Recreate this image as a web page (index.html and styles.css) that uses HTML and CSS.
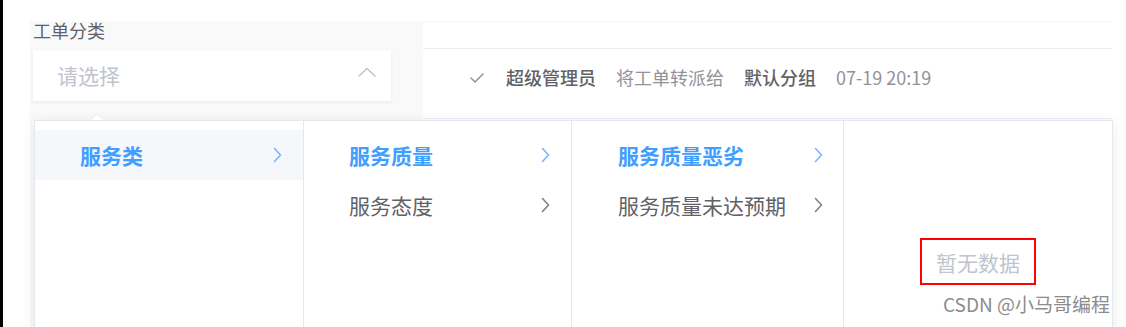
FILE: index.html
```html
<!DOCTYPE html>
<html lang="zh-CN">
<head>
<meta charset="utf-8">
<title>工单分类</title>
<link rel="stylesheet" href="styles.css">
</head>
<body>
<div class="shot">
  <div class="edge"></div>
  <div class="page">
    <div class="form-panel">
      <div class="label">工单分类</div>
      <div class="select">
        <span class="placeholder">请选择</span>
        <svg class="caret" width="18" height="10" viewBox="0 0 18 10"><polyline points="1,9 9,1.5 17,9" fill="none" stroke="#c0c4cc" stroke-width="1.6" stroke-linecap="round" stroke-linejoin="round"/></svg>
      </div>
    </div>
    <div class="log-panel">
      <div class="log-row">
        <svg class="check" width="14" height="10" viewBox="0 0 14 10"><polyline points="1,5 5,9 13,1" fill="none" stroke="#909399" stroke-width="1.5" stroke-linecap="round" stroke-linejoin="round"/></svg>
        <span class="strong">超级管理员</span>
        <span class="muted">将工单转派给</span>
        <span class="strong">默认分组</span>
        <span class="muted">07-19 20:19</span>
      </div>
    </div>
  </div>

  <div class="popper">
    <div class="menu menu-1">
      <div class="item active hover"><span>服务类</span><svg class="chev" width="9" height="16" viewBox="0 0 9 16"><polyline points="1.5,1.5 7.5,8 1.5,14.5" fill="none" stroke-width="1.6" stroke-linecap="round" stroke-linejoin="round"/></svg></div>
    </div>
    <div class="menu menu-2">
      <div class="item active"><span>服务质量</span><svg class="chev" width="9" height="16" viewBox="0 0 9 16"><polyline points="1.5,1.5 7.5,8 1.5,14.5" fill="none" stroke-width="1.6" stroke-linecap="round" stroke-linejoin="round"/></svg></div>
      <div class="item"><span>服务态度</span><svg class="chev" width="9" height="16" viewBox="0 0 9 16"><polyline points="1.5,1.5 7.5,8 1.5,14.5" fill="none" stroke-width="1.6" stroke-linecap="round" stroke-linejoin="round"/></svg></div>
    </div>
    <div class="menu menu-3">
      <div class="item active"><span>服务质量恶劣</span><svg class="chev" width="9" height="16" viewBox="0 0 9 16"><polyline points="1.5,1.5 7.5,8 1.5,14.5" fill="none" stroke-width="1.6" stroke-linecap="round" stroke-linejoin="round"/></svg></div>
      <div class="item"><span>服务质量未达预期</span><svg class="chev" width="9" height="16" viewBox="0 0 9 16"><polyline points="1.5,1.5 7.5,8 1.5,14.5" fill="none" stroke-width="1.6" stroke-linecap="round" stroke-linejoin="round"/></svg></div>
    </div>
    <div class="menu menu-4">
      <div class="empty">暂无数据</div>
    </div>
  </div>
  <div class="popper-arrow"></div>

  <div class="watermark">CSDN @小马哥编程</div>
</div>
</body>
</html>
```

FILE: styles.css
```css
* { box-sizing: border-box; }

html, body {
  margin: 0;
  padding: 0;
  background: #ffffff;
}

body {
  font-family: "Noto Sans CJK SC", "Noto Sans", "Liberation Sans", sans-serif;
}

.shot {
  position: relative;
  width: 1126px;
  height: 327px;
  overflow: hidden;
  display: flex;
  background: #ffffff;
}

.edge {
  width: 3px;
  flex: none;
  background: #000000;
}

.page {
  flex: 1;
  display: flex;
  padding-top: 21px;
}

.form-panel {
  margin-left: 27px;
  width: 393px;
  flex: none;
  background: #f9f9fa;
  padding-left: 3px;
}

.label {
  font-size: 18px;
  line-height: 18px;
  color: #606266;
}

.select {
  margin-top: 11px;
  width: 358px;
  height: 51px;
  background: #ffffff;
  box-shadow: 0 1px 3px rgba(0, 0, 0, 0.07);
  display: flex;
  align-items: center;
  justify-content: space-between;
  padding: 0 15px 0 24px;
}

.placeholder {
  font-size: 21px;
  color: #c0c4cc;
  line-height: 24px;
  margin-top: -1px;
}

.caret {
  display: block;
  margin-top: -8px;
}

.log-panel {
  width: 689px;
  flex: none;
  border-top: 1px solid #f6f6f7;
  padding-top: 26px;
}

.log-row {
  border-top: 1px solid #ebeef5;
  border-bottom: 1px solid #ebeef5;
  height: 71px;
  padding: 19px 0 0 47px;
  display: flex;
  align-items: flex-start;
  font-size: 18px;
  line-height: 18px;
}

.check {
  display: block;
  margin-top: 5px;
  margin-right: 22px;
}

.strong {
  color: #606266;
  font-weight: 500;
  margin-right: 20px;
}

.muted {
  color: #909399;
  margin-right: 20px;
}

.popper {
  position: absolute;
  left: 34px;
  top: 120px;
  width: 1079px;
  height: 240px;
  background: #ffffff;
  border: 1px solid #e4e7ed;
  box-shadow: 0 2px 12px rgba(0, 0, 0, 0.08);
  display: flex;
}

.popper-arrow {
  position: absolute;
  left: 91px;
  top: 114px;
  width: 0;
  height: 0;
  border-left: 6px solid transparent;
  border-right: 6px solid transparent;
  border-bottom: 6px solid #ffffff;
  filter: drop-shadow(0 -1px 0 #e4e7ed);
}

.menu {
  height: 100%;
  padding-top: 9px;
  border-right: 1px solid #e4e7ed;
  flex: none;
}

.menu-1 { width: 269px; }
.menu-2 { width: 268px; }
.menu-3 { width: 272px; }
.menu-4 {
  flex: 1;
  border-right: none;
  display: flex;
  justify-content: center;
  align-items: flex-start;
  padding-top: 117px;
}

.item {
  height: 50px;
  display: flex;
  align-items: center;
  justify-content: space-between;
  padding: 0 21px 0 45px;
  font-size: 21px;
  color: #606266;
}

.item .chev {
  display: block;
  stroke: #7d8087;
}

.item.active {
  color: #409eff;
  font-weight: 700;
}

.item.active .chev {
  stroke: #79b6ff;
}

.item.hover {
  background: #f5f7fa;
}

.menu-3 .item { padding-left: 46px; padding-right: 20px; }

.empty {
  width: 116px;
  height: 47px;
  border: 2px solid #ff0000;
  display: flex;
  align-items: center;
  justify-content: center;
  font-size: 21px;
  color: #c0c4cc;
}

.watermark {
  position: absolute;
  right: 16px;
  top: 293px;
  font-size: 19px;
  line-height: 22px;
  color: #8c8c8c;
  font-family: "Noto Sans CJK SC", "Liberation Sans", sans-serif;
}
```
